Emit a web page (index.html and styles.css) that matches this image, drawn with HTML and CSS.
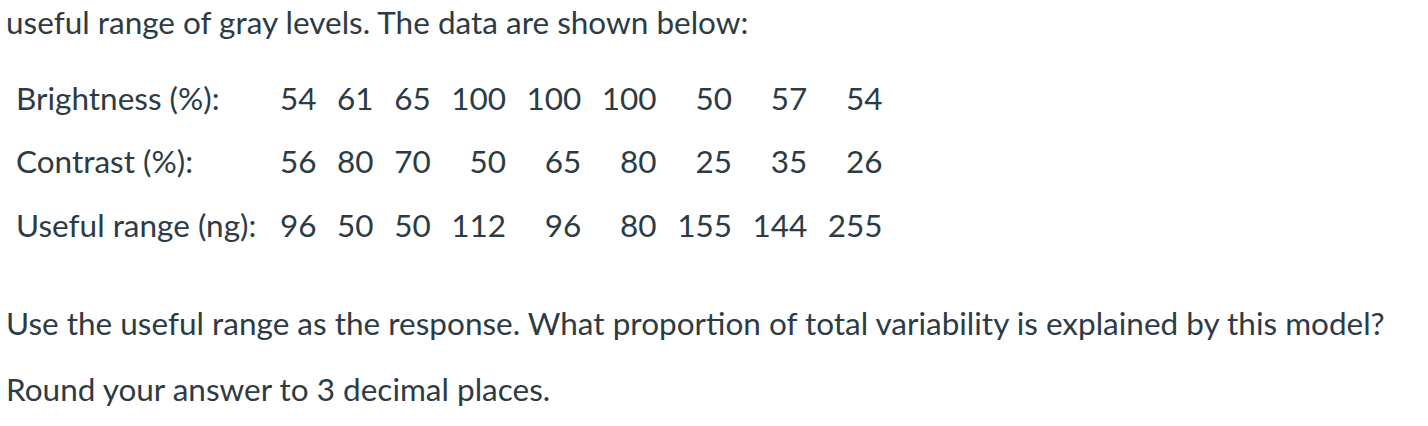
FILE: index.html
```html
<!DOCTYPE html>
<html>
<head>
<meta charset="utf-8">
<link rel="stylesheet" href="styles.css">
</head>
<body>
<div class="question">
  <p class="lead">useful range of gray levels. The data are shown below:</p>
  <table class="data">
    <tbody>
      <tr>
        <td class="label">Brightness (%):</td>
        <td>54</td><td>61</td><td>65</td><td>100</td><td>100</td><td>100</td><td>50</td><td>57</td><td>54</td>
      </tr>
      <tr>
        <td class="label">Contrast (%):</td>
        <td>56</td><td>80</td><td>70</td><td>50</td><td>65</td><td>80</td><td>25</td><td>35</td><td>26</td>
      </tr>
      <tr>
        <td class="label">Useful range (ng):</td>
        <td>96</td><td>50</td><td>50</td><td>112</td><td>96</td><td>80</td><td>155</td><td>144</td><td>255</td>
      </tr>
    </tbody>
  </table>
  <p class="prompt">Use the useful range as the response. What proportion of total variability is explained by this model?</p>
  <p class="prompt">Round your answer to 3 decimal places.</p>
</div>
</body>
</html>
```
FILE: styles.css
```css
html, body {
  margin: 0;
  padding: 0;
  background: #ffffff;
}
body {
  padding: 0 6px;
  font-family: Lato, "Open Sans", sans-serif;
  font-size: 31.5px;
  color: #2d3b45;
}
.question p {
  margin: 0;
  line-height: 48px;
}
.question p.lead {
  line-height: 44px;
}
.data {
  border-collapse: separate;
  border-spacing: 0;
  margin: 22px 0 42px 0;
}
.data td {
  padding: 0 10.25px;
  height: 63.5px;
  text-align: right;
  white-space: nowrap;
}
.data td.label {
  text-align: left;
  padding-left: 10px;
  padding-right: 13.5px;
}
.question p.prompt {
  margin-bottom: 18px;
}
```
